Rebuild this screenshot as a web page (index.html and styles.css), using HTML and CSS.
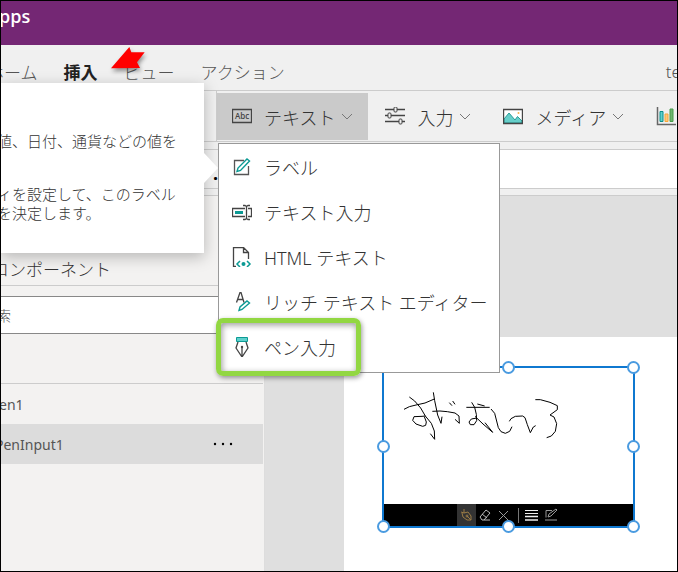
FILE: index.html
```html
<!DOCTYPE html>
<html lang="ja">
<head>
    <meta charset="UTF-8">
    <meta name="viewport" content="width=device-width, initial-scale=1.0">
    <title>Apps</title>
    <link rel="stylesheet" href="styles.css">
</head>
<body>

<div class="app">
    <header class="header">pps</header>

    <nav class="tabs">
        <a class="tab" href="#">ホーム</a>
        <a class="tab active" href="#">挿入
            <svg class="arrow" viewBox="0 0 105 69"><path d="M0 64 L55 0 L61 16 L101 16 L78 46 L87 63 Z" fill="#f00"/></svg>
        </a>
        <a class="tab" href="#">ビュー</a>
        <a class="tab" href="#">アクション</a>
        <span class="app-name">te</span>
    </nav>

    <div class="ribbon">
        <div class="ribbon-items">
            <div class="dropdown">
                <button class="ribbon-btn open" type="button">
                    <svg class="icon" viewBox="0 0 20 20" fill="none" stroke="#444"><path d="M.5 2.500h19v13H.5z" stroke-width="1.300"/><text class="abc" x="3" y="12">Abc</text></svg>
                    テキスト
                    <svg class="chevron" viewBox="0 0 12 8"><path d="M1 1l5 5 5-5"/></svg>
                </button>
                <div class="menu">
                    <button class="menu-item" type="button">
                        <svg class="icon" viewBox="0 0 20 20" fill="none"><path d="M12 3.500H2.500v14h14V9" stroke="#555" stroke-width="1.300"/><path d="M5 14.500l1-3.500L15 2l2.500 2-9 9.500z" stroke="#0b9a94" stroke-width="1.400"/></svg>
                        ラベル
                    </button>
                    <button class="menu-item" type="button">
                        <svg class="icon" viewBox="0 0 20 20" fill="none" stroke="#444"><path d="M13 6.500H.5v8H13M16 6.500h3.500v8H16M11 3.500h2l1.500 1 1.500-1h2M11 17.500h2l1.500-1 1.500 1h2M14.500 4.500v12" stroke-width="1.300"/><path d="M3 10.500h8" stroke="#0b9a94" stroke-width="3"/></svg>
                        テキスト入力
                    </button>
                    <button class="menu-item" type="button">
                        <svg class="icon" viewBox="0 0 20 20" fill="none"><path d="M4 19.500H1.500V.5h10l5 5V12M11.500.5v5h5" stroke="#444" stroke-width="1.300"/><path d="M8 14l-3 3 3 3M15 14l3 3-3 3" stroke="#0b9a94" stroke-width="1.500"/><circle cx="11.500" cy="17" r="2" fill="#0b9a94"/></svg>
                        HTML テキスト
                    </button>
                    <button class="menu-item" type="button">
                        <svg class="icon" viewBox="0 0 20 20" fill="none"><path d="M4.500 10.500L8 .5h1l3 10M5.500 7.500H11" stroke="#444" stroke-width="1.300"/><path d="M7 18.500l1-3.500 7-6 2.500 2-7.500 6.500z" stroke="#0b9a94" stroke-width="1.400"/></svg>
                        リッチ テキスト エディター
                    </button>
                    <button class="menu-item marked" type="button">
                        <svg class="icon" viewBox="0 0 20 20" fill="none"><path d="M4.500.5h11v4h-11z" fill="#5fd0cc" stroke="#0b9a94"/><path d="M6 5l-2 6 6 9 6-9-2-6M10 11v9" stroke="#444" stroke-width="1.300"/><circle cx="10" cy="10" r="1.200" fill="#444"/></svg>
                        ペン入力
                    </button>
                </div>
            </div>
            <button class="ribbon-btn" type="button">
                <svg class="icon" viewBox="0 0 20 20" fill="#f0f0f0" stroke="#444"><path d="M0 2.500h20M0 8.500h20M0 14.500h20" stroke-width="1.400"/><rect x="9" y="0" width="3" height="5" rx="1"/><rect x="3" y="6" width="3" height="5" rx="1"/><rect x="14" y="12" width="3" height="5" rx="1"/></svg>
                入力
                <svg class="chevron" viewBox="0 0 12 8"><path d="M1 1l5 5 5-5"/></svg>
            </button>
            <button class="ribbon-btn" type="button">
                <svg class="icon" viewBox="0 0 20 20" fill="none"><path d="M.5 2.500h19v14H.5z" fill="#fff"/><path d="M1 12l5-6 6 7 2.500-3.500L19 14v2H1z" fill="#66cfca" stroke="#2a9d98"/><circle cx="15.500" cy="6" r="1" fill="#f5b04d"/><path d="M.5 2.500h19v14H.5z" stroke="#444" stroke-width="1.400"/></svg>
                メディア
                <svg class="chevron" viewBox="0 0 12 8"><path d="M1 1l5 5 5-5"/></svg>
            </button>
            <button class="ribbon-btn" type="button" aria-label="グラフ">
                <svg class="icon" viewBox="0 0 20 20" fill="none"><path d="M1.500 0v17.500H20" stroke="#666" stroke-width="1.500"/><path d="M4 4.500h3v10H4z" fill="#5fd0cc" stroke="#0b8f8a"/><path d="M9 7h3v7.500H9z" fill="#fdc87a" stroke="#f7a63a"/><path d="M14 2h3v12.500h-3z" fill="#6fb56f" stroke="#499c4b"/></svg>
            </button>
        </div>
    </div>

    <div class="formula">
        <span class="formula-label">.</span>
        <input class="formula-input" type="text" aria-label="数式">
    </div>

    <div class="main">
        <aside class="tree">
            <h2 class="tree-title">コンポーネント</h2>
            <input class="search" type="search" placeholder="索" aria-label="検索">
            <ul class="tree-list">
                <li class="tree-row">en1</li>
                <li class="tree-row selected">PenInput1
                    <button class="more" type="button" aria-label="その他">
                        <svg viewBox="0 0 20 4"><circle cx="2" cy="2" r="1.200"/><circle cx="10" cy="2" r="1.200"/><circle cx="18" cy="2" r="1.200"/></svg>
                    </button>
                </li>
            </ul>
        </aside>

        <section class="canvas">
            <div class="screen">
                <div class="pen">
                    <svg class="ink" viewBox="0 0 570 210">
                        <path d="M42 88L58 80 78 75 105 69 133 57M58 51L74 63 92 84 106 108 124 130 133 153 134 178 121 161M106 108L96 109 72 110 68 121 78 132 98 139 107 136 109 126 103 110M130 37L134 62 143 105 153 130 156 110M127 94L150 93 172 95 195 99 207 108 208 130 195 118M178 68L186 77M188 63L195 73"/>
                        <path d="M229 82H299M262 72L284 78M245 67L254 82 259 103 260 122 252 134 241 134 237 126 244 117 261 114M255 109L279 132 308 157 285 128M303 87L314 100 325 143 333 155 346 160 359 154 366 140M358 124L363 116 376 109 398 108 405 113 412 134 421 158 430 141 437 137M436 59L451 59 480 67 502 77V89L480 105 492 111 500 131 496 154 484 168 470 173"/>
                    </svg>
                    <div class="pen-bar">
                        <button class="pen-btn on" type="button" aria-label="ペン"><svg viewBox="0 0 14 14" stroke="#9a7b45"><path d="M2 4l3 1 4-1 3 4v4H8L4 9 3 5M5 1v4M8 8l4 4"/><circle cx="8" cy="8" r="1"/></svg></button>
                        <button class="pen-btn" type="button" aria-label="消しゴム"><svg viewBox="0 0 14 14" stroke="#bbb"><path d="M2 9l6-7 4 3-6 7H4zM4 6l5 4M6 12h6"/></svg></button>
                        <button class="pen-btn" type="button" aria-label="クリア"><svg viewBox="0 0 14 14" stroke="#999"><path d="M2 3l9 9M11 3l-9 9"/></svg></button>
                        <span class="pen-sep"></span>
                        <button class="pen-btn" type="button" aria-label="太さ"><svg viewBox="0 0 14 14" stroke="#eee"><path d="M0 2.500h13M0 5.500h13"/><path d="M0 8.500h13M0 12h13" stroke-width="1.500"/></svg></button>
                        <button class="pen-btn" type="button" aria-label="色"><svg viewBox="0 0 14 14" stroke="#999"><path d="M8 2.500H2v7M4 9l1-3 7-5 1 1-6 6zM1 12h12"/></svg></button>
                    </div>
                    <i class="handle top center"></i>
                    <i class="handle top right"></i>
                    <i class="handle middle left"></i>
                    <i class="handle middle right"></i>
                    <i class="handle bottom left"></i>
                    <i class="handle bottom center"></i>
                    <i class="handle bottom right"></i>
                </div>
            </div>
        </section>
    </div>

    <div class="tooltip">
        <p>値、日付、通貨などの値を</p>
        <p>ィを設定して、このラベル<br>を決定します。</p>
    </div>
</div>

</body>
</html>
```
FILE: styles.css
```css
*, *::after {
    box-sizing: border-box;
}
body {
    margin: 0;
    font-family: "Noto Sans", "Noto Sans CJK JP", sans-serif;
    font-size: 18px;
    font-weight: 300;
    color: #333;
}
button, input {
    font: inherit;
    color: inherit;
}
button {
    border: none;
    background: none;
    padding: 0;
}
.app {
    position: relative;
    display: flex;
    flex-direction: column;
    min-height: 100vh;
    border: 1px solid #000;
    background: #f0f0f0;
    overflow: hidden;
}

/* header and tabs */
.header {
    height: 44px;
    line-height: 30px;
    background: #742774;
    color: #fff;
    font-family: "Open Sans", sans-serif;
    font-weight: 600;
    text-indent: -2px;
}
.tabs {
    display: flex;
    align-items: center;
    gap: 26px;
    height: 46px;
    padding-top: 8px;
    border-bottom: 1px solid #ccc;
    text-indent: 0;
    white-space: nowrap;
    font-size: 17px;
}
.tab {
    position: relative;
    color: #555;
    text-decoration: none;
}
.tab:first-child {
    margin-left: -14px;
}
.tab.active {
    color: #222;
    font-weight: 700;
}
.arrow {
    position: absolute;
    left: 47px;
    top: -12px;
    width: 35px;
    height: 23px;
    z-index: 1;
    overflow: visible;
    filter: drop-shadow(1px 3px 2px rgba(0, 0, 0, 0.4));
}
.app-name {
    margin-left: auto;
    margin-right: -4px;
    color: #555;
}

/* ribbon */
.ribbon {
    padding-left: 215px;
    border-bottom: 1px solid #ccc;
}
.ribbon-items {
    display: flex;
    gap: 2px;
    height: 50px;
    padding: 2px 0 1px;
    border-left: 1px solid #ccc;
}
.dropdown {
    position: relative;
}
.ribbon-btn {
    display: flex;
    flex-shrink: 0;
    align-items: center;
    height: 47px;
    padding: 0 15px;
    white-space: nowrap;
}
.ribbon-btn.open {
    background: #cacaca;
}
.icon {
    width: 20px;
    height: 20px;
    margin-right: 12px;
    flex-shrink: 0;
}
.abc {
    font-family: "Open Sans", sans-serif;
    font-size: 8px;
    font-weight: 600;
    fill: #444;
    stroke: none;
}
.chevron {
    width: 12px;
    height: 8px;
    margin-left: 6px;
    fill: none;
    stroke: #777;
}
.menu {
    position: absolute;
    z-index: 3;
    top: 50px;
    left: 1px;
    padding-bottom: 3px;
    border: 1px solid #999;
    background: #fff;
}
.menu-item {
    position: relative;
    display: flex;
    align-items: center;
    width: 100%;
    height: 45px;
    padding: 0 11px 0 13px;
    white-space: nowrap;
}
.menu-item.marked::after {
    content: "";
    position: absolute;
    top: -6px;
    left: -3px;
    width: 145px;
    height: 58px;
    border: 5px solid #92d742;
    border-radius: 7px;
    box-shadow: 1px 2px 5px rgba(0, 0, 0, 0.4), inset 1px 2px 6px rgba(0, 0, 0, 0.4);
}

/* formula bar */
.formula {
    display: flex;
    padding: 7px 0 6px;
    border-bottom: 1px solid #ccc;
}
.formula-label {
    width: 217px;
    height: 40px;
    line-height: 46px;
    border: solid #ccc;
    border-width: 1px 0;
    text-align: right;
    font-weight: 700;
    color: #000;
}
.formula-input {
    flex: 1;
    min-width: 0;
    height: 40px;
    border: solid #ccc;
    border-width: 1px 0;
    background: #fff;
}

/* tree view */
.main {
    display: flex;
    flex: 1;
}
.tree {
    width: 264px;
    flex-shrink: 0;
    padding-right: 1px;
    border-right: 1px solid #ddd;
    background: #f3f2f1;
}
.tree-title {
    height: 90px;
    margin: 0 0 10px;
    padding-top: 59px;
    border-bottom: 1px solid #ccc;
    font-size: 17px;
    line-height: 30px;
    font-weight: 300;
    text-indent: -9px;
}
.search {
    display: block;
    width: 255px;
    height: 38px;
    margin-left: -5px;
    padding: 0;
    border: 1px solid #888;
    border-radius: 0;
    background: #fff;
    font-size: 14px;
}
.search::placeholder {
    color: #555;
}
.tree-list {
    margin: 49px 0 0;
    padding: 0;
    border-top: 1px solid #ccc;
    list-style: none;
    font-size: 14px;
    font-weight: 400;
}
.tree-row {
    display: flex;
    align-items: center;
    justify-content: space-between;
    height: 40px;
    color: #555;
    text-indent: -2px;
}
.tree-row.selected {
    text-indent: -6px;
    background: #dcdcdc;
}
.more {
    width: 20px;
    height: 8px;
    margin-right: 30px;
}
.more svg {
    display: block;
    width: 20px;
    height: 4px;
    fill: #000;
}

/* canvas */
.canvas {
    display: flex;
    flex: 1;
    padding: 141px 0 0 79px;
    background: #dfdfdf;
}
.screen {
    flex: 1;
    padding: 29px 42px 0 38px;
    background: #fff;
}
.pen {
    position: relative;
    display: flex;
    flex-direction: column;
    justify-content: space-between;
    height: 162px;
    border: 2px solid #0f78d0;
}
.ink {
    width: 190px;
    height: 70px;
    margin: 12px 0 0 6px;
    fill: none;
    stroke: #000;
    stroke-width: 3;
}
.pen-bar {
    display: flex;
    align-items: center;
    justify-content: center;
    height: 22px;
    background: #000;
}
.pen-btn {
    display: flex;
    align-items: center;
    justify-content: center;
    width: 19px;
    height: 22px;
}
.pen-btn.on {
    background: #333;
}
.pen-btn svg {
    width: 14px;
    height: 14px;
    fill: none;
}
.pen-sep {
    width: 1px;
    height: 15px;
    margin: 0 4px;
    background: #777;
}
.handle {
    position: absolute;
    width: 13px;
    height: 13px;
    margin: -7px;
    border: 2px solid #4a9be0;
    border-radius: 50%;
    background: #fff;
}
.top {
    top: 0;
}
.middle {
    top: 50%;
}
.bottom {
    bottom: 0;
}
.left {
    left: 0;
}
.center {
    left: 50%;
}
.right {
    right: 0;
}

/* tooltip */
.tooltip {
    position: absolute;
    z-index: 2;
    top: 82px;
    left: 0;
    width: 203px;
    padding: 49px 0 30px;
    background: #fff;
    box-shadow: 0 4px 14px rgba(0, 0, 0, 0.25);
    font-size: 15px;
    line-height: 19px;
    white-space: nowrap;
}
.tooltip::after {
    content: "";
    position: absolute;
    left: 100%;
    top: 70px;
    border: solid transparent;
    border-width: 15px 0 15px 14px;
    border-left-color: #fff;
}
.tooltip p {
    margin: 0 0 34px -4px;
}
.tooltip p:last-child {
    margin-bottom: 0;
}
```
